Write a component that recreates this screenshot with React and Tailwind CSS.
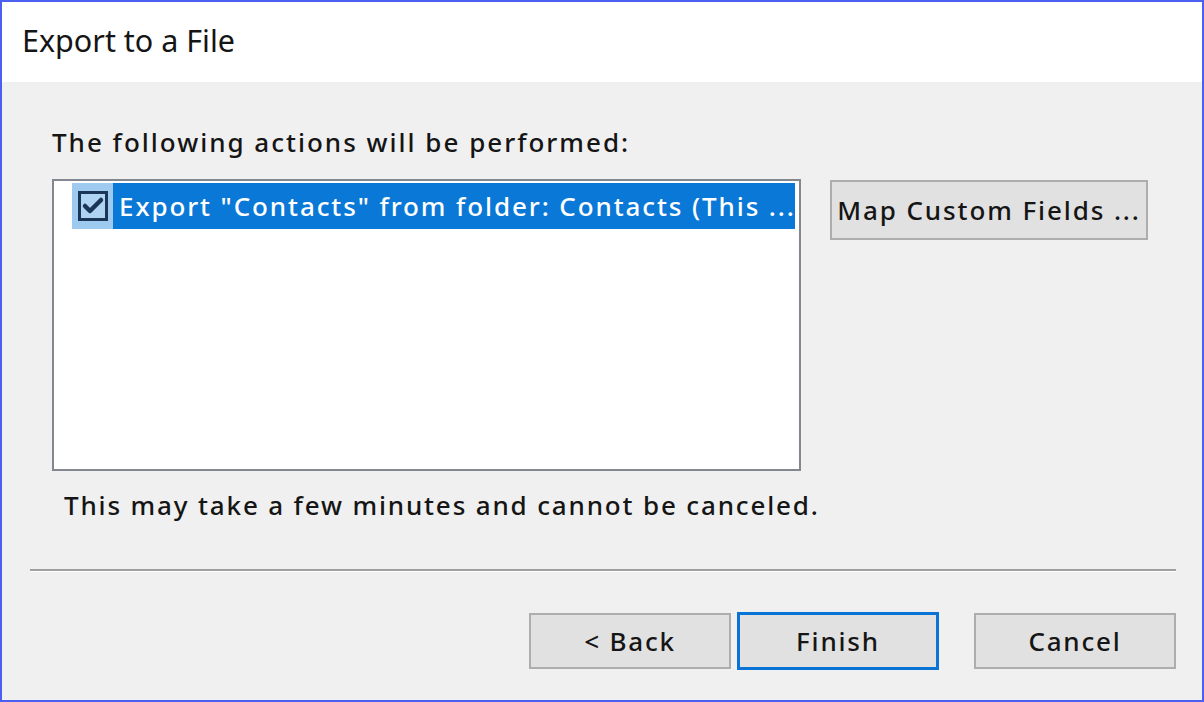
import { Check } from "lucide-react";

const FONT = { fontFamily: '"Noto Sans", "Open Sans", sans-serif' };

function DialogButton({ children, primary = false, className = "" }) {
  return (
    <button
      className={`h-[56px] w-[202px] flex items-center justify-center bg-[#e1e1e1] text-[26px] font-medium tracking-[1.8px] text-[#151515] ${
        primary ? "border-[3px] border-[#0a74d6]" : "border-2 border-[#adadad]"
      } ${className}`}
    >
      {children}
    </button>
  );
}

export default function App() {
  return (
    <div
      className="w-[1204px] h-[702px] flex flex-col border-2 border-[#4b5ff0] bg-[#f0f0f0]"
      style={FONT}
    >
      {/* title strip */}
      <div className="h-[80px] shrink-0 bg-white flex items-center pl-[20px] pb-[2px]">
        <h1 className="text-[30.5px] text-[#151515]">Export to a File</h1>
      </div>

      <div className="flex-1 flex flex-col">
        <p className="mt-[40px] ml-[50px] text-[26px] font-medium tracking-[2px] leading-[40px] text-[#151515]">
          The following actions will be performed:
        </p>

        <div className="mt-[17px] ml-[50px] flex items-start">
          <div className="w-[749px] h-[292px] border-2 border-[#828790] bg-white pt-[2px] pl-[18px] pr-[4px]">
            <div className="flex h-[46px]">
              <div className="w-[41px] shrink-0 bg-[#9fcaf0] flex items-center justify-center">
                <div className="w-[30px] h-[30px] border-[3px] border-[#1b3556] bg-[#aed3f3] flex items-center justify-center">
                  <Check className="w-[24px] h-[24px] text-[#1b3556]" strokeWidth={4.5} />
                </div>
              </div>
              <div className="flex-1 bg-[#0a78d7] text-white text-[26px] font-medium tracking-[1.9px] leading-[46px] pl-[6px] whitespace-nowrap overflow-hidden">
                Export "Contacts" from folder: Contacts (This ...
              </div>
            </div>
          </div>

          <button className="ml-[29px] mt-[1px] w-[318px] h-[60px] bg-[#e1e1e1] border-2 border-[#adadad] text-[26px] font-medium tracking-[1.9px] text-[#151515] flex items-center justify-center">
            Map Custom Fields ...
          </button>
        </div>

        <p className="mt-[14px] ml-[62px] text-[26px] font-medium tracking-[1.85px] leading-[40px] text-[#151515]">
          This may take a few minutes and cannot be canceled.
        </p>

        {/* etched separator */}
        <div className="mt-[44px] ml-[28px] mr-[26px] h-[3px] border-t-2 border-[#a0a0a0] bg-white" />

        <div className="mt-[40px] mr-[26px] flex justify-end items-center">
          <DialogButton>&lt; Back</DialogButton>
          <DialogButton primary className="ml-[6px] h-[58px]">
            Finish
          </DialogButton>
          <DialogButton className="ml-[35px]">Cancel</DialogButton>
        </div>
      </div>
    </div>
  );
}
